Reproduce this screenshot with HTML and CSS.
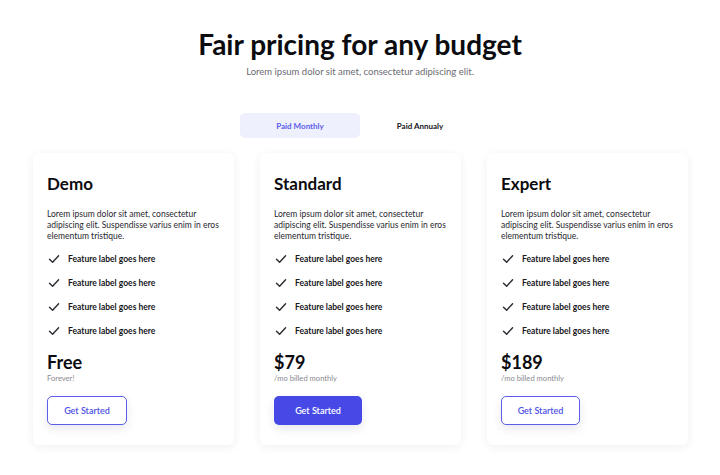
FILE: index.html
```html
<!DOCTYPE html>
<html>
<head>
<meta charset="utf-8">
<link rel="stylesheet" href="styles.css">
</head>
<body>
<div class="page">
  <header class="head">
    <h1 class="title">Fair pricing for any budget</h1>
    <p class="subtitle">Lorem ipsum dolor sit amet, consectetur adipiscing elit.</p>
  </header>
  <div class="toggle">
    <div class="tab active">Paid Monthly</div>
    <div class="tab">Paid Annualy</div>
  </div>
  <div class="cards">
    <div class="card">
      <h2 class="name">Demo</h2>
      <p class="desc">Lorem ipsum dolor sit amet, consectetur adipiscing elit. Suspendisse varius enim in eros elementum tristique.</p>
      <ul class="features">
        <li><svg class="check" viewBox="0 0 12 12"><path d="M1.5 6.2 L4.6 9.2 L10.6 2.8"/></svg>Feature label goes here</li>
        <li><svg class="check" viewBox="0 0 12 12"><path d="M1.5 6.2 L4.6 9.2 L10.6 2.8"/></svg>Feature label goes here</li>
        <li><svg class="check" viewBox="0 0 12 12"><path d="M1.5 6.2 L4.6 9.2 L10.6 2.8"/></svg>Feature label goes here</li>
        <li><svg class="check" viewBox="0 0 12 12"><path d="M1.5 6.2 L4.6 9.2 L10.6 2.8"/></svg>Feature label goes here</li>
      </ul>
      <div class="price">Free</div>
      <div class="note">Forever!</div>
      <a class="btn outline w80">Get Started</a>
    </div>
    <div class="card">
      <h2 class="name">Standard</h2>
      <p class="desc">Lorem ipsum dolor sit amet, consectetur adipiscing elit. Suspendisse varius enim in eros elementum tristique.</p>
      <ul class="features">
        <li><svg class="check" viewBox="0 0 12 12"><path d="M1.5 6.2 L4.6 9.2 L10.6 2.8"/></svg>Feature label goes here</li>
        <li><svg class="check" viewBox="0 0 12 12"><path d="M1.5 6.2 L4.6 9.2 L10.6 2.8"/></svg>Feature label goes here</li>
        <li><svg class="check" viewBox="0 0 12 12"><path d="M1.5 6.2 L4.6 9.2 L10.6 2.8"/></svg>Feature label goes here</li>
        <li><svg class="check" viewBox="0 0 12 12"><path d="M1.5 6.2 L4.6 9.2 L10.6 2.8"/></svg>Feature label goes here</li>
      </ul>
      <div class="price">$79</div>
      <div class="note">/mo billed monthly</div>
      <a class="btn solid w88">Get Started</a>
    </div>
    <div class="card">
      <h2 class="name">Expert</h2>
      <p class="desc">Lorem ipsum dolor sit amet, consectetur adipiscing elit. Suspendisse varius enim in eros elementum tristique.</p>
      <ul class="features">
        <li><svg class="check" viewBox="0 0 12 12"><path d="M1.5 6.2 L4.6 9.2 L10.6 2.8"/></svg>Feature label goes here</li>
        <li><svg class="check" viewBox="0 0 12 12"><path d="M1.5 6.2 L4.6 9.2 L10.6 2.8"/></svg>Feature label goes here</li>
        <li><svg class="check" viewBox="0 0 12 12"><path d="M1.5 6.2 L4.6 9.2 L10.6 2.8"/></svg>Feature label goes here</li>
        <li><svg class="check" viewBox="0 0 12 12"><path d="M1.5 6.2 L4.6 9.2 L10.6 2.8"/></svg>Feature label goes here</li>
      </ul>
      <div class="price">$189</div>
      <div class="note">/mo billed monthly</div>
      <a class="btn outline w78">Get Started</a>
    </div>
  </div>
</div>
</body>
</html>
```
FILE: styles.css
```css
* { box-sizing: border-box; }
html, body { margin: 0; padding: 0; background: #ffffff; }
body { font-family: "Lato", "Inter", "Liberation Sans", sans-serif; color: #111111; }
.page { width: 720px; height: 475px; overflow: hidden; }
.head { text-align: center; padding-top: 27px; }
.title { margin: 0; font-size: 28px; font-weight: 700; line-height: 34px; color: #0c0c10; letter-spacing: 0; }
.subtitle { margin: 5px 0 0; font-size: 9.5px; line-height: 12px; color: #6b6b72; }
.toggle { display: flex; justify-content: center; margin-top: 35px; margin-left: 122px; margin-right: 122px; }
.tab { width: 120px; height: 25px; display: flex; align-items: center; justify-content: center; font-size: 8px; font-weight: 700; color: #15151a; border-radius: 5px; }
.tab.active { background: #eef0fd; color: #5a5de8; }
.cards { display: flex; gap: 26px; padding: 15px 0 0 33px; }
.card { width: 201px; height: 292px; background: #fff; border-radius: 6px; box-shadow: 0 2px 10px rgba(40, 40, 90, 0.07); padding: 20px 14px 0 14px; }
.name { margin: 0; font-size: 17px; line-height: 22px; font-weight: 700; color: #0c0c10; }
.desc { margin: 14px 0 0; font-size: 8.5px; line-height: 11px; color: #27272e; }
.features { list-style: none; margin: 5px 0 0; padding: 0; }
.features li { display: flex; align-items: center; height: 24px; font-size: 8.5px; font-weight: 700; color: #16161b; }
.check { width: 12px; height: 12px; margin-right: 8px; margin-left: 1px; fill: none; stroke: #2a2a30; stroke-width: 1.4; stroke-linecap: round; stroke-linejoin: round; }
.price { margin-top: 9px; font-size: 18px; line-height: 20px; font-weight: 700; color: #0c0c10; }
.note { margin-top: 1px; font-size: 7.6px; line-height: 10px; color: #8a8a90; }
.btn { margin-top: 13px; height: 29px; display: flex; align-items: center; justify-content: center; font-size: 9px; font-weight: 600; border-radius: 5px; box-shadow: 0 4px 10px rgba(40, 40, 90, 0.10); }
.outline { border: 1.5px solid #5b5ee9; color: #4f52e3; background: #fff; }
.solid { background: #4749e6; color: #fff; }
.w80 { width: 80px; }
.w88 { width: 88px; }
.w78 { width: 79px; }
```
